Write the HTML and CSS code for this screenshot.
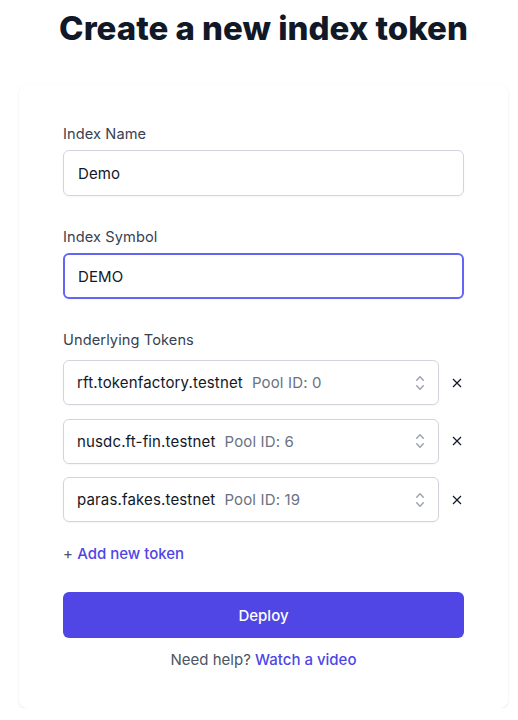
FILE: index.html
```html
<!DOCTYPE html>
<html lang="en">
<head>
<meta charset="utf-8">
<title>Create a new index token</title>
<link rel="stylesheet" href="styles.css">
</head>
<body>
<main class="page">
  <h1 class="title">Create a new index token</h1>
  <section class="card">
    <div class="field">
      <label class="label">Index Name</label>
      <div class="input">Demo</div>
    </div>
    <div class="field">
      <label class="label">Index Symbol</label>
      <div class="input input-focus">DEMO</div>
    </div>
    <div class="field">
      <label class="label">Underlying Tokens</label>
      <div class="token-list">
        <div class="token-row">
          <div class="select">
            <span class="token-name">rft.tokenfactory.testnet</span>
            <span class="pool">Pool ID: 0</span>
            <svg class="chevron" viewBox="0 0 20 20" fill="currentColor"><path fill-rule="evenodd" d="M10 3a.75.75 0 01.55.24l3.25 3.5a.75.75 0 11-1.1 1.02L10 4.852 7.3 7.760a.75.75 0 01-1.1-1.020l3.25-3.5A.75.75 0 0110 3zm-3.76 9.2a.75.75 0 011.06.04l2.7 2.908 2.7-2.908a.75.75 0 111.1 1.020l-3.25 3.5a.75.75 0 01-1.1 0l-3.25-3.5a.75.75 0 01.04-1.06z" clip-rule="evenodd"/></svg>
          </div>
          <svg class="remove" viewBox="0 0 10 10"><path d="M1 1L9 9M9 1L1 9"/></svg>
        </div>
        <div class="token-row">
          <div class="select">
            <span class="token-name">nusdc.ft-fin.testnet</span>
            <span class="pool">Pool ID: 6</span>
            <svg class="chevron" viewBox="0 0 20 20" fill="currentColor"><path fill-rule="evenodd" d="M10 3a.75.75 0 01.55.24l3.25 3.5a.75.75 0 11-1.1 1.02L10 4.852 7.3 7.760a.75.75 0 01-1.1-1.020l3.25-3.5A.75.75 0 0110 3zm-3.76 9.2a.75.75 0 011.06.04l2.7 2.908 2.7-2.908a.75.75 0 111.1 1.020l-3.25 3.5a.75.75 0 01-1.1 0l-3.25-3.5a.75.75 0 01.04-1.06z" clip-rule="evenodd"/></svg>
          </div>
          <svg class="remove" viewBox="0 0 10 10"><path d="M1 1L9 9M9 1L1 9"/></svg>
        </div>
        <div class="token-row">
          <div class="select">
            <span class="token-name">paras.fakes.testnet</span>
            <span class="pool">Pool ID: 19</span>
            <svg class="chevron" viewBox="0 0 20 20" fill="currentColor"><path fill-rule="evenodd" d="M10 3a.75.75 0 01.55.24l3.25 3.5a.75.75 0 11-1.1 1.02L10 4.852 7.3 7.760a.75.75 0 01-1.1-1.020l3.25-3.5A.75.75 0 0110 3zm-3.76 9.2a.75.75 0 011.06.04l2.7 2.908 2.7-2.908a.75.75 0 111.1 1.020l-3.25 3.5a.75.75 0 01-1.1 0l-3.25-3.5a.75.75 0 01.04-1.06z" clip-rule="evenodd"/></svg>
          </div>
          <svg class="remove" viewBox="0 0 10 10"><path d="M1 1L9 9M9 1L1 9"/></svg>
        </div>
      </div>
    </div>
    <div class="add"><span class="plus">+</span> <a class="link">Add new token</a></div>
    <button class="deploy">Deploy</button>
    <p class="help">Need help? <a class="link">Watch a video</a></p>
  </section>
</main>
</body>
</html>
```
FILE: styles.css
```css
* { box-sizing: border-box; }
html, body { margin: 0; background: #ffffff; }
body {
  font-family: Inter, "Noto Sans", "Liberation Sans", sans-serif;
  color: #111827;
}
.page {
  padding: 8px 10px 0 19px;
}
.title {
  margin: 0;
  text-align: center;
  font-size: 33px;
  line-height: 41px;
  font-weight: 800;
  color: #111827;
}
.card {
  margin-top: 36px;
  background: #fff;
  border-radius: 8px;
  box-shadow: 0 1px 3px rgba(0,0,0,0.08), 0 1px 2px -1px rgba(0,0,0,0.06);
  padding: 39px 44px 37px;
}
.field { display: flex; flex-direction: column; }
.field + .field { margin-top: 31px; }
.label {
  font-size: 14.6px;
  line-height: 20px;
  font-weight: 400;
  letter-spacing: 0.1px;
  color: #374151;
  margin-bottom: 6px;
}
.input {
  height: 46px;
  border: 1px solid #d1d5db;
  border-radius: 6px;
  padding: 0 14px;
  display: flex;
  align-items: center;
  font-size: 15px;
  letter-spacing: 0.1px;
  color: #111827;
  box-shadow: 0 1px 2px rgba(0,0,0,0.04);
}
.input-focus {
  border: 2px solid #6366f1;
  padding: 0 13px;
}
.token-list {
  margin-top: 4px;
  display: flex;
  flex-direction: column;
  gap: 13.5px;
}
.token-row {
  display: flex;
  align-items: center;
  gap: 13px;
  padding-right: 2px;
}
.select {
  flex: 1;
  height: 45px;
  border: 1px solid #d1d5db;
  border-radius: 6px;
  display: flex;
  align-items: center;
  padding: 0 8px 0 13px;
  font-size: 15px;
  letter-spacing: 0.15px;
  box-shadow: 0 1px 2px rgba(0,0,0,0.04);
}
.token-name { color: #111827; }
.pool { margin-left: 9px; color: #6b7280; }
.chevron {
  width: 20px;
  height: 20px;
  margin-left: auto;
  color: #9ca3af;
}
.remove {
  width: 10px;
  height: 10px;
  stroke: #111827;
  stroke-width: 1.2;
  fill: none;
}
.add {
  margin-top: 21px;
  font-size: 15px;
  line-height: 22px;
}
.plus { color: #4b5563; }
.link { color: #4f46e5; font-weight: 500; text-decoration: none; }
.deploy {
  display: block;
  width: 100%;
  height: 46px;
  margin-top: 27px;
  border: 0;
  border-radius: 6px;
  background: #4f46e5;
  color: #fff;
  font-family: inherit;
  font-size: 15px;
  font-weight: 500;
}
.help {
  margin: 11px 0 0;
  text-align: center;
  font-size: 15px;
  line-height: 22px;
  color: #4b5563;
}
```
